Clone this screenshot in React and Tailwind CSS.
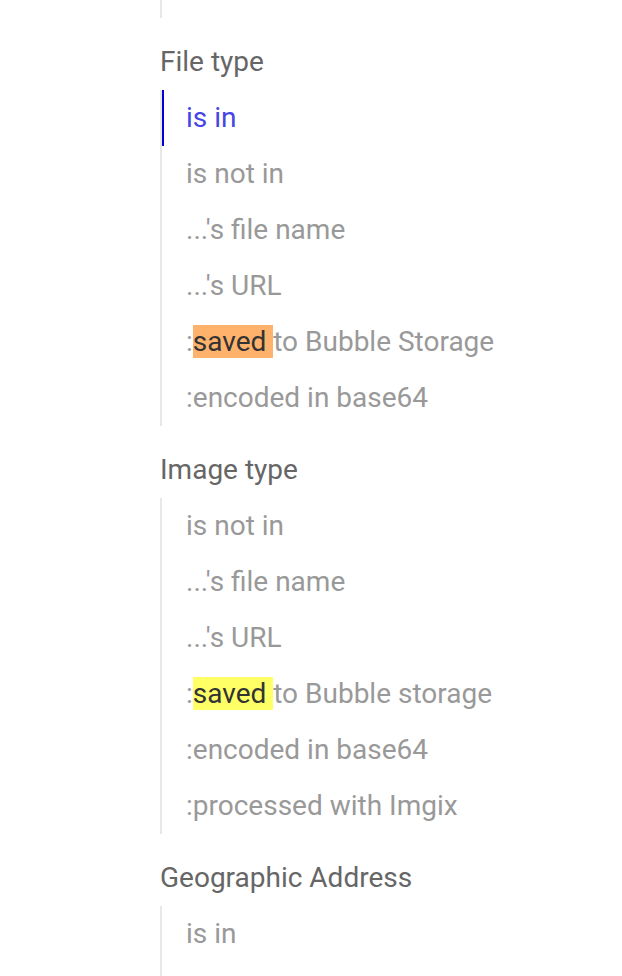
const sections = [
  {
    title: 'File type',
    items: [
      { text: 'is in', active: true },
      { text: 'is not in' },
      { text: "...'s file name" },
      { text: "...'s URL" },
      { pre: ':', mark: 'saved ', rest: 'to Bubble Storage', markColor: 'orange' },
      { text: ':encoded in base64' },
    ],
  },
  {
    title: 'Image type',
    items: [
      { text: 'is not in' },
      { text: "...'s file name" },
      { text: "...'s URL" },
      { pre: ':', mark: 'saved ', rest: 'to Bubble storage', markColor: 'yellow' },
      { text: ':encoded in base64' },
      { text: ':processed with Imgix' },
    ],
  },
  {
    title: 'Geographic Address',
    items: [{ text: 'is in' }],
    tail: true,
  },
];

function Item({ item }) {
  return (
    <li
      className={`flex h-14 items-center pl-[22px] -ml-[2px] border-l-2 ${
        item.active ? 'border-[#0000d0] text-[#4545e6]' : 'border-transparent text-[#999999]'
      }`}
    >
      {item.mark ? (
        <span className="whitespace-pre">
          {item.pre}
          <span
            className={`text-[#333333] ${item.markColor === 'orange' ? 'bg-[#ffb26b]' : 'bg-[#ffff66]'}`}
          >
            {item.mark}
          </span>
          {item.rest}
        </span>
      ) : (
        item.text
      )}
    </li>
  );
}

export default function App() {
  return (
    <div
      className="h-screen bg-white pl-[160px] overflow-hidden text-[28px]"
      style={{ fontFamily: 'Roboto, "Liberation Sans", sans-serif' }}
    >
      <div className="h-[18px] border-l-2 border-[#e8e8e8]" />
      {sections.map((s) => (
        <div key={s.title}>
          <div className="mt-4 flex h-14 items-center text-[#666666]">{s.title}</div>
          <ul className={`border-l-2 border-[#e8e8e8] pl-[2px] ${s.tail ? 'pb-10' : ''}`}>
            {s.items.map((it, i) => (
              <Item key={i} item={it} />
            ))}
          </ul>
        </div>
      ))}
    </div>
  );
}
